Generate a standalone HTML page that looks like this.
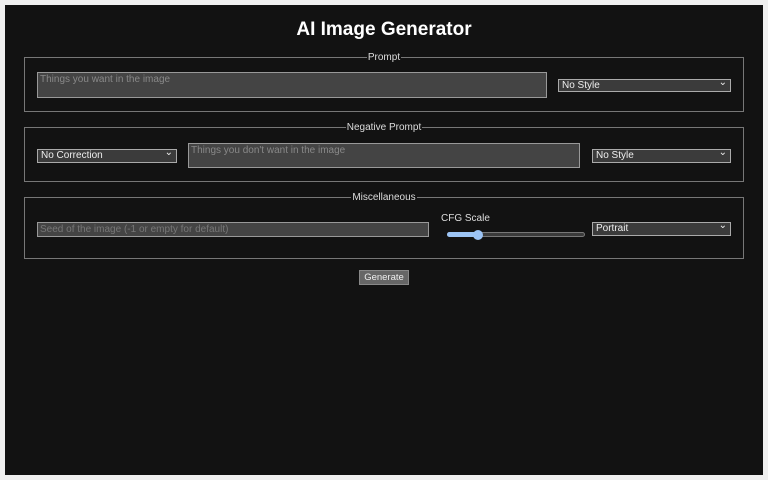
<!DOCTYPE html>
<html><head><meta charset="utf-8"><style>
*{box-sizing:border-box;margin:0;padding:0}
body{width:768px;height:480px;background:#f0f0f0;font-family:"Liberation Sans",sans-serif;position:relative;overflow:hidden}
.main{position:absolute;left:5px;top:5px;width:758px;height:470px;background:#121212}
.a{position:absolute}
h1{position:absolute;left:0;width:768px;top:19px;text-align:center;color:#fff;font-size:19px;font-weight:bold}
.fs{position:absolute;border:1px solid #777}
.lg{position:absolute;top:-6px;left:0;right:0;text-align:center;font-size:10px;line-height:12px;color:#ddd}
.lg span{background:#121212;padding:0 1px}
.ta{position:absolute;background:#444;border:1px solid #999;color:#888;font-size:10px;padding:1px 2px;line-height:11px}
.sel{position:absolute;background:#3b3b3b;border:1px solid #aaa;color:#eee;font-size:10px;line-height:12px;padding:0 3px}
.sel:after{content:"⌄";position:absolute;right:3px;top:-3px;font-size:10px}
</style></head><body>
<div class="main"></div>
<h1>AI Image Generator</h1>

<div class="fs" style="left:24px;top:57px;width:720px;height:55px"><div class="lg"><span>Prompt</span></div></div>
<div class="ta" style="left:37px;top:72px;width:510px;height:26px">Things you want in the image</div>
<div class="sel" style="left:558px;top:79px;width:173px;height:13px">No Style</div>

<div class="fs" style="left:24px;top:127px;width:720px;height:55px"><div class="lg"><span>Negative Prompt</span></div></div>
<div class="sel" style="left:37px;top:149px;width:140px;height:14px">No Correction</div>
<div class="ta" style="left:188px;top:143px;width:392px;height:25px">Things you don't want in the image</div>
<div class="sel" style="left:592px;top:149px;width:139px;height:14px">No Style</div>

<div class="fs" style="left:24px;top:197px;width:720px;height:62px"><div class="lg"><span>Miscellaneous</span></div></div>
<div class="ta" style="left:37px;top:222px;width:392px;height:15px;color:#777">Seed of the image (-1 or empty for default)</div>
<div class="a" style="left:441px;top:213px;color:#ddd;font-size:10px">CFG Scale</div>
<div class="a" style="left:447px;top:232px;width:138px;height:5px;background:#3a3a3a;border:1px solid #777;border-radius:3px"></div>
<div class="a" style="left:447px;top:232px;width:32px;height:5px;background:#9cc4f5;border-radius:3px"></div>
<div class="a" style="left:473px;top:230px;width:10px;height:10px;background:#9cc4f5;border-radius:50%"></div>
<div class="sel" style="left:592px;top:222px;width:139px;height:14px">Portrait</div>

<div class="a" style="left:359px;top:270px;width:50px;height:15px;background:#666;border:1px solid #888;color:#eee;font-size:9.5px;text-align:center;line-height:13px">Generate</div>
</body></html>
